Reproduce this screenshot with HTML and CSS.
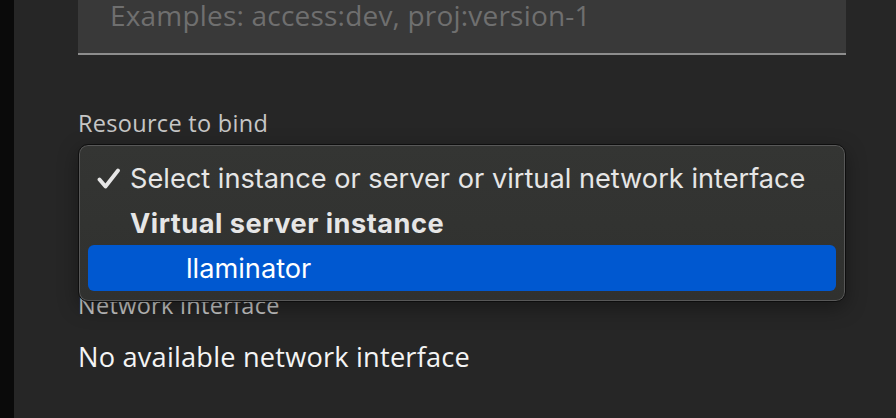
FILE: index.html
```html
<!DOCTYPE html>
<html lang="en">
<head>
<meta charset="utf-8">
<title>Bind resource</title>
<link rel="stylesheet" href="styles.css">
</head>
<body>
<div class="edge"></div>
<main class="panel">
  <div class="field field-tags">
    <div class="text-input"><span class="placeholder">Examples: access:dev, proj:version-1</span></div>
  </div>

  <div class="field field-select">
    <div class="label">Resource to bind</div>
    <div class="select-box"></div>
    <div class="menu" role="listbox">
      <div class="menu-item selected">
        <svg class="check" width="24" height="22" viewBox="0 0 24 22"><path d="M2.5 11.5 L8.5 18.5 L21 2.5" fill="none" stroke="#e6e6e6" stroke-width="3.8" stroke-linecap="round" stroke-linejoin="round"/></svg>
        <span>Select instance or server or virtual network interface</span>
      </div>
      <div class="menu-group">Virtual server instance</div>
      <div class="menu-item option active"><span>llaminator</span></div>
    </div>
  </div>

  <div class="field field-nic">
    <div class="label">Network interface</div>
    <div class="value">No available network interface</div>
  </div>
</main>
</body>
</html>
```

FILE: styles.css
```css
html, body {
  margin: 0;
  padding: 0;
  height: 100%;
}
body {
  background: #0a0a0a;
  display: flex;
  overflow: hidden;
  font-family: "Open Sans", "Noto Sans", sans-serif;
}
.edge {
  width: 14px;
  flex: 0 0 14px;
}
.panel {
  flex: 1;
  background: #262626;
  padding: 0 50px 0 64px;
  display: flex;
  flex-direction: column;
}
.field-tags {
  margin-top: -25px;
}
.text-input {
  height: 78px;
  background: #393939;
  border-bottom: 2px solid #8d8d8d;
  padding: 0 32px;
  display: flex;
  align-items: center;
}
.placeholder {
  font-size: 28px;
  color: #6f6f6f;
  letter-spacing: 0.2px;
  margin-top: 1px;
}
.label {
  font-size: 23.5px;
  line-height: 32px;
  color: #c6c6c6;
  letter-spacing: 0.3px;
}
.field-select {
  position: relative;
  margin-top: 52px;
}
.select-box {
  margin-top: 16px;
  height: 78px;
  background: #393939;
  border-bottom: 2px solid #8d8d8d;
}
.menu {
  position: absolute;
  top: 37px;
  left: 0;
  right: 0;
  height: 158px;
  box-sizing: border-box;
  padding: 11px 9px 10px;
  border-radius: 10px;
  border: 1px solid #0e0e0e;
  background: linear-gradient(180deg, #343533 0%, #30312f 100%);
  box-shadow: inset 0 0 0 1px #585858, 0 6px 20px rgba(0, 0, 0, 0.35);
  font-family: Inter, "Liberation Sans", sans-serif;
  font-size: 27.2px;
  color: #e6e6e6;
  display: flex;
  flex-direction: column;
}
.menu-item, .menu-group {
  height: 45px;
  display: flex;
  align-items: center;
  padding-left: 42px;
  position: relative;
}
.menu-group {
  font-weight: 700;
  letter-spacing: 0.5px;
}
.check {
  position: absolute;
  left: 9px;
  top: 12px;
}
.option {
  padding-left: 98px;
  height: 46px;
  border-radius: 6px;
}
.option.active {
  background: #0058d0;
  color: #ffffff;
}
.field-nic {
  margin-top: 54px;
}
.value {
  margin-top: 16px;
  font-size: 27.2px;
  line-height: 40px;
  color: #f4f4f4;
  letter-spacing: 0.2px;
}
```
